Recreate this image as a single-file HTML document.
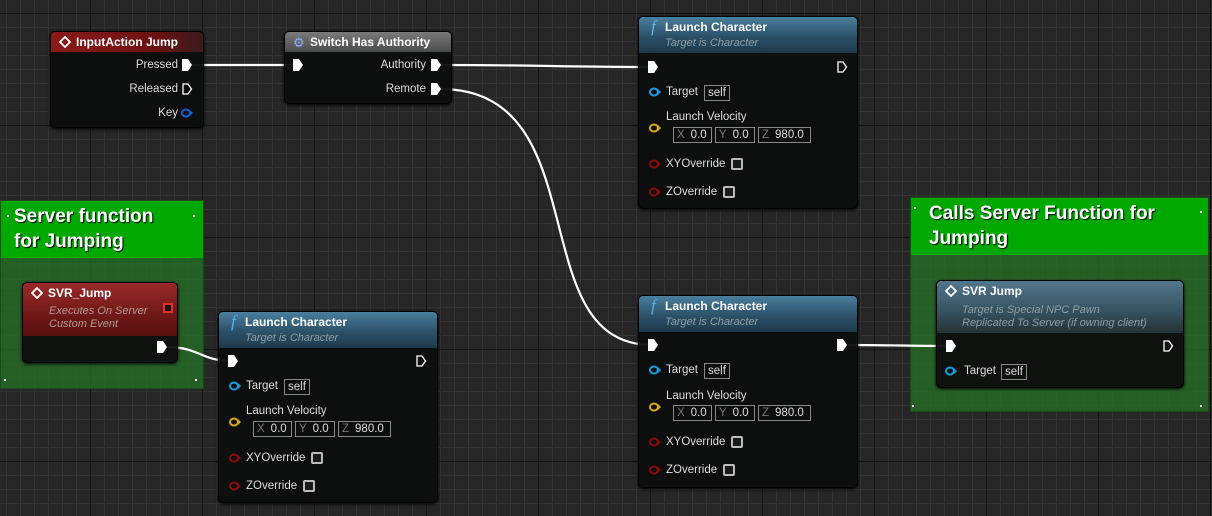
<!DOCTYPE html>
<html><head><meta charset="utf-8"><style>
*{margin:0;padding:0;box-sizing:border-box}
body{width:1212px;height:516px;overflow:hidden;font-family:"Liberation Sans",sans-serif;color:#ddd;font-size:11px;position:relative;
background-color:#262626;
background-image:
linear-gradient(90deg,#151515 1px,transparent 1px),
linear-gradient(0deg,#151515 1px,transparent 1px),
linear-gradient(90deg,#333 1px,transparent 1px),
linear-gradient(0deg,#333 1px,transparent 1px);
background-size:112px 112px,112px 112px,14px 14px,14px 14px;
background-position:90px 0,0 14px,6px 0,0 0;}
.a{position:absolute}
.cm{position:absolute;background:rgba(38,112,38,0.78);border:1px solid #1a4a1a}
.cmh{position:absolute;left:0;top:0;right:0;background:#00a800;color:#fff;font-weight:bold;font-size:19px;line-height:25px;padding:3px 0 0 13px;text-shadow:1px 1px 1px #000}
.dot{position:absolute;width:2px;height:2px;background:#fff}
.node{position:absolute;background:rgba(12,14,13,0.95);border:1px solid #000;border-radius:5px;box-shadow:0 1px 3px #000;overflow:hidden}
.hd{position:absolute;left:0;top:0;right:0;color:#fff;font-weight:bold;font-size:12px}
.bl{background:linear-gradient(180deg,#4a7f9e 0%,#2c5068 55%,#1e3a4a 100%)}
.sub{position:absolute;font-style:italic;color:#8e9ea4;font-size:11px}
.t{position:absolute;color:#ddd;font-size:11.5px;white-space:nowrap}
.box{position:absolute;border:1px solid #888;height:16px;font-size:11.5px;line-height:14px;color:#ddd;padding:0 3px}
.box i{font-style:normal;color:#777;margin-right:6px}
.cb{position:absolute;width:12px;height:12px;border:2px solid #bbb;border-radius:2px;background:#1a1a1a}
</style></head><body>

<div class="cm" style="left:0;top:200px;width:204px;height:189px"><div class="cmh" style="height:57px">Server function<br>for Jumping</div>
<div class="dot" style="left:6px;top:14px"></div><div class="dot" style="left:192px;top:14px"></div><div class="dot" style="left:3px;top:178px"></div><div class="dot" style="left:194px;top:178px"></div></div>
<div class="cm" style="left:910px;top:197px;width:299px;height:215px"><div class="cmh" style="height:57px;padding-left:18px">Calls Server Function for<br>Jumping</div>
<div class="dot" style="left:3px;top:9px"></div><div class="dot" style="left:289px;top:13px"></div><div class="dot" style="left:1px;top:207px"></div><div class="dot" style="left:289px;top:207px"></div></div>

<svg class="a" style="left:0;top:0" width="1212" height="516">
<g fill="none" stroke="#fff" stroke-width="2.2">
<path d="M188 65 L297 65"/>
<path d="M440 65 C540 65 560 67 652 67"/>
<path d="M440 89 C600 89 520 345 652 345"/>
<path d="M166 347 C200 347 200 361 232 361"/>
<path d="M845 345 C900 345 900 346 950 346"/>
</g></svg>

<div class="node" style="left:50px;top:31px;width:154px;height:97px">
<div class="hd" style="height:20px;background:linear-gradient(90deg,#8a1a1a,#6a1212 70%,#3a1a1a);padding:3px 0 0 25px">InputAction Jump</div>
<svg class="a" style="left:8px;top:4px" width="12" height="12"><path d="M6 1 L11 6 L6 11 L1 6Z" fill="none" stroke="#fff" stroke-width="1.8"/></svg>
<div class="t" style="right:25px;top:27px">Pressed</div>
<div class="t" style="right:25px;top:51px">Released</div>
<div class="t" style="right:25px;top:75px">Key</div>
</div>
<div class="node" style="left:284px;top:31px;width:168px;height:73px">
<div class="hd" style="height:20px;background:linear-gradient(180deg,#7a7a7a,#4a4a4a);padding:3px 0 0 25px">Switch Has Authority</div>
<div class="a" style="left:8px;top:3px;color:#8ab0ff;font-size:13px">⚙</div>
<div class="t" style="right:25px;top:27px">Authority</div>
<div class="t" style="right:25px;top:51px">Remote</div>
</div>

<div class="node" style="left:638px;top:16px;width:220px;height:193px">
<div class="hd bl" style="height:36px;padding:3px 0 0 26px">Launch Character</div>
<div class="a" style="left:12px;top:0px;color:#5ab0f0;font-style:italic;font-family:'Liberation Serif',serif;font-size:17px">f</div>
<div class="sub" style="left:26px;top:20px">Target is Character</div>
<div class="t" style="left:27px;top:69px">Target</div><div class="box" style="left:65px;top:68px">self</div>
<div class="t" style="left:27px;top:94px">Launch Velocity</div>
<div class="box" style="left:34px;top:110px;width:39px"><i>X</i>0.0</div>
<div class="box" style="left:76px;top:110px;width:40px"><i>Y</i>0.0</div>
<div class="box" style="left:119px;top:110px;width:53px"><i>Z</i>980.0</div>
<div class="t" style="left:27px;top:141px">XYOverride</div><div class="cb" style="left:92px;top:141px"></div>
<div class="t" style="left:27px;top:169px">ZOverride</div><div class="cb" style="left:84px;top:169px"></div>
</div>
<div class="node" style="left:638px;top:295px;width:220px;height:193px">
<div class="hd bl" style="height:36px;padding:3px 0 0 26px">Launch Character</div>
<div class="a" style="left:12px;top:0px;color:#5ab0f0;font-style:italic;font-family:'Liberation Serif',serif;font-size:17px">f</div>
<div class="sub" style="left:26px;top:20px">Target is Character</div>
<div class="t" style="left:27px;top:68px">Target</div><div class="box" style="left:65px;top:67px">self</div>
<div class="t" style="left:27px;top:94px">Launch Velocity</div>
<div class="box" style="left:34px;top:109px;width:39px"><i>X</i>0.0</div>
<div class="box" style="left:76px;top:109px;width:40px"><i>Y</i>0.0</div>
<div class="box" style="left:119px;top:109px;width:53px"><i>Z</i>980.0</div>
<div class="t" style="left:27px;top:140px">XYOverride</div><div class="cb" style="left:92px;top:140px"></div>
<div class="t" style="left:27px;top:168px">ZOverride</div><div class="cb" style="left:84px;top:168px"></div>
</div>
<div class="node" style="left:218px;top:311px;width:220px;height:192px">
<div class="hd bl" style="height:36px;padding:3px 0 0 26px">Launch Character</div>
<div class="a" style="left:12px;top:0px;color:#5ab0f0;font-style:italic;font-family:'Liberation Serif',serif;font-size:17px">f</div>
<div class="sub" style="left:26px;top:20px">Target is Character</div>
<div class="t" style="left:27px;top:68px">Target</div><div class="box" style="left:65px;top:67px">self</div>
<div class="t" style="left:27px;top:93px">Launch Velocity</div>
<div class="box" style="left:34px;top:109px;width:39px"><i>X</i>0.0</div>
<div class="box" style="left:76px;top:109px;width:40px"><i>Y</i>0.0</div>
<div class="box" style="left:119px;top:109px;width:53px"><i>Z</i>980.0</div>
<div class="t" style="left:27px;top:140px">XYOverride</div><div class="cb" style="left:92px;top:140px"></div>
<div class="t" style="left:27px;top:168px">ZOverride</div><div class="cb" style="left:84px;top:168px"></div>
</div>

<div class="node" style="left:22px;top:282px;width:156px;height:81px">
<div class="hd" style="height:53px;background:linear-gradient(180deg,#9a2a2a,#6a1515 70%,#5a1010);padding:3px 0 0 25px">SVR_Jump</div>
<svg class="a" style="left:8px;top:4px" width="12" height="12"><path d="M6 1 L11 6 L6 11 L1 6Z" fill="none" stroke="#fff" stroke-width="1.8"/></svg>
<div class="sub" style="left:26px;top:22px;color:#b09a90">Executes On Server</div>
<div class="sub" style="left:26px;top:35px;color:#b09a90">Custom Event</div>
<div class="a" style="left:140px;top:20px;width:10px;height:10px;border:2px solid #e03030;background:#111"></div>
</div>
<div class="node" style="left:936px;top:280px;width:248px;height:108px">
<div class="hd" style="height:52px;background:linear-gradient(180deg,#52778c,#35505e 60%,#243438);padding:3px 0 0 25px">SVR Jump</div>
<svg class="a" style="left:8px;top:4px" width="12" height="12"><path d="M6 1 L11 6 L6 11 L1 6Z" fill="none" stroke="#fff" stroke-width="1.8"/></svg>
<div class="sub" style="left:25px;top:23px">Target is Special NPC Pawn</div>
<div class="sub" style="left:25px;top:36px">Replicated To Server (if owning client)</div>
<div class="t" style="left:27px;top:84px">Target</div><div class="box" style="left:64px;top:83px">self</div>
</div>

<svg class="a" style="left:0;top:0" width="1212" height="516">
<defs>
<path id="ef" d="M-5 -6 H1 L5 0 L1 6 H-5Z" fill="#fff"/>
<path id="eo" d="M-4 -5 H1 L4.5 0 L1 5 H-4Z" fill="none" stroke="#fff" stroke-width="1.3"/>
</defs>
<use href="#ef" x="187" y="65"/><use href="#eo" x="187" y="89"/>
<use href="#ef" x="298" y="65"/><use href="#ef" x="436" y="65"/><use href="#ef" x="436" y="89"/>
<use href="#ef" x="653" y="67"/><use href="#eo" x="842" y="67"/>
<use href="#ef" x="653" y="345"/><use href="#ef" x="842" y="345"/>
<use href="#ef" x="233" y="361"/><use href="#eo" x="421" y="361"/>
<use href="#ef" x="162" y="347"/>
<use href="#ef" x="951" y="346"/><use href="#eo" x="1168" y="346"/>
<g fill="none" stroke-width="2">
<g stroke="#1060d0"><ellipse cx="186" cy="113" rx="4" ry="3.5"/></g>
<g stroke="#1a9ae0">
<ellipse cx="654" cy="92" rx="4" ry="3.5"/><ellipse cx="654" cy="370" rx="4" ry="3.5"/><ellipse cx="234" cy="386" rx="4" ry="3.5"/><ellipse cx="950" cy="371" rx="4" ry="3.5"/></g>
<g stroke="#d8a818">
<ellipse cx="654" cy="128" rx="4" ry="3.5"/><ellipse cx="654" cy="407" rx="4" ry="3.5"/><ellipse cx="234" cy="422" rx="4" ry="3.5"/></g>
<g stroke="#8a0a0a">
<ellipse cx="654" cy="164" rx="4" ry="3.5"/><ellipse cx="654" cy="192" rx="4" ry="3.5"/><ellipse cx="654" cy="442" rx="4" ry="3.5"/><ellipse cx="654" cy="470" rx="4" ry="3.5"/><ellipse cx="234" cy="458" rx="4" ry="3.5"/><ellipse cx="234" cy="486" rx="4" ry="3.5"/></g>
</g>
<g>
<path d="M190 110 L193 113 L190 116Z" fill="#1060d0"/>
<path d="M658 89 L661 92 L658 95Z M658 367 L661 370 L658 373Z M238 383 L241 386 L238 389Z M954 368 L957 371 L954 374Z" fill="#1a9ae0"/>
<path d="M658 125 L661 128 L658 131Z M658 404 L661 407 L658 410Z M238 419 L241 422 L238 425Z" fill="#d8a818"/>
<path d="M658 161 L661 164 L658 167Z M658 189 L661 192 L658 195Z M658 439 L661 442 L658 445Z M658 467 L661 470 L658 473Z M238 455 L241 458 L238 461Z M238 483 L241 486 L238 489Z" fill="#8a0a0a"/>
</g>
</svg>
</body></html>
